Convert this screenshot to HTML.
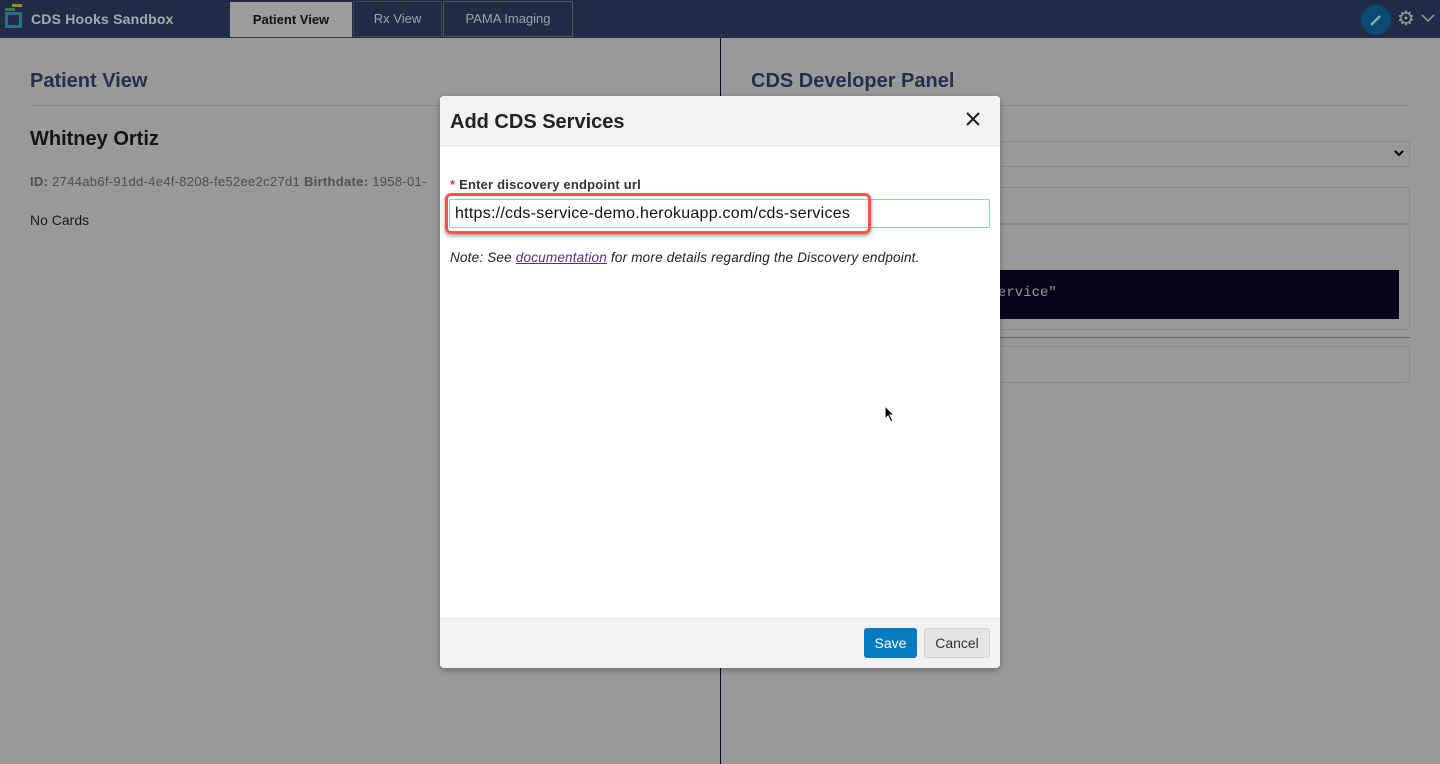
<!DOCTYPE html>
<html><head><meta charset="utf-8"><style>
*{box-sizing:border-box;margin:0;padding:0}
body{width:1440px;height:764px;overflow:hidden;background:#999;font-family:"Liberation Sans",sans-serif;position:relative}
.a{position:absolute}
</style></head><body>
<div class="a" style="left:0;top:0;width:1440px;height:38px;background:#212d47"></div>
<div class="a" style="left:12px;top:4px;width:10px;height:3px;background:#a08a18"></div>
<div class="a" style="left:5px;top:8px;width:10px;height:3px;background:#3a7a4a"></div>
<div class="a" style="left:5px;top:12px;width:17px;height:16px;border:3px solid #2a6d8a"></div>
<div class="a" style="left:31px;top:11px;color:#a5a9b0;font-weight:bold;font-size:14px;letter-spacing:0.2px">CDS Hooks Sandbox</div>
<div class="a" style="left:230px;top:2px;width:122px;height:36px;background:#9c9c9c;border-bottom:1px solid #333;color:#111;font-weight:bold;font-size:13px;text-align:center;line-height:36px">Patient View</div>
<div class="a" style="left:353px;top:1px;width:89px;height:36px;background:#212d47;border:1px solid #444;color:#9ea2aa;font-size:13px;text-align:center;line-height:34px">Rx View</div>
<div class="a" style="left:443px;top:1px;width:130px;height:36px;background:#212d47;border:1px solid #555;color:#9ea2aa;font-size:13px;text-align:center;line-height:34px">PAMA Imaging</div>
<div class="a" style="left:1361px;top:5px;width:30px;height:30px;border-radius:50%;background:#0a4a73"></div>
<svg class="a" style="left:1367px;top:11px" width="18" height="18"><path d="M4 14 L13 5" stroke="#8aa" stroke-width="2.5"/></svg>
<div class="a" style="left:1397px;top:6px;color:#999;font-size:20px">⚙</div>
<svg class="a" style="left:1421px;top:13px" width="14" height="10"><path d="M1 2 L7 8 L13 2" stroke="#999" fill="none" stroke-width="1.5"/></svg>
<div class="a" style="left:720px;top:38px;width:1px;height:726px;background:#0b0b30"></div>
<div class="a" style="left:30px;top:70px;font-size:20px;font-weight:bold;color:#233050">Patient View</div>
<div class="a" style="left:30px;top:105px;width:680px;height:1px;background:#888"></div>
<div class="a" style="left:30px;top:128px;font-size:20px;font-weight:bold;color:#141414">Whitney Ortiz</div>
<div class="a" style="left:30px;top:174px;font-size:13px;color:#505050;white-space:nowrap;letter-spacing:0.3px"><b>ID:</b> 2744ab6f-91dd-4e4f-8208-fe52ee2c27d1 <b>Birthdate:</b> 1958-01-</div>
<div class="a" style="left:30px;top:212px;font-size:14px;color:#1a1a1a">No Cards</div>
<div class="a" style="left:751px;top:70px;font-size:20px;font-weight:bold;color:#233050">CDS Developer Panel</div>
<div class="a" style="left:750px;top:105px;width:660px;height:1px;background:#888"></div>
<div class="a" style="left:900px;top:141px;width:510px;height:26px;border:1px solid #888;border-radius:3px"></div>
<svg class="a" style="left:1394px;top:150px" width="10" height="8"><path d="M1 1 L5 5 L9 1" stroke="#000" fill="none" stroke-width="2"/></svg>
<div class="a" style="left:900px;top:187px;width:510px;height:37px;border:1px solid #888;border-radius:3px"></div>
<div class="a" style="left:900px;top:224px;width:510px;height:106px;border:1px solid #888;border-radius:3px"></div>
<div class="a" style="left:900px;top:270px;width:499px;height:49px;background:#06031a"></div>
<div class="a" style="left:998px;top:285px;font-family:'Liberation Mono',monospace;font-size:14px;color:#999">ervice"</div>
<div class="a" style="left:900px;top:337px;width:510px;height:1px;background:#666"></div>
<div class="a" style="left:900px;top:346px;width:510px;height:37px;border:1px solid #888;border-radius:3px"></div>
<div class="a" style="left:440px;top:96px;width:560px;height:572px;background:#fff;border-radius:4px;box-shadow:0 2px 8px rgba(0,0,0,.3);overflow:hidden">
 <div class="a" style="left:0;top:0;width:560px;height:50px;background:#f2f2f2;border-bottom:1px solid #e4e4e4"></div>
 <div class="a" style="left:10px;top:15px;font-size:20px;font-weight:bold;color:#222">Add CDS Services</div>
 <svg class="a" style="left:526px;top:16px" width="14" height="14"><path d="M1 1 L13 13 M13 1 L1 13" stroke="#222" stroke-width="2"/></svg>
 <div class="a" style="left:10px;top:81px;font-size:13px;font-weight:bold;color:#333;letter-spacing:0.2px"><span style="color:#e33">*</span> Enter discovery endpoint url</div>
 <div class="a" style="left:9px;top:103px;width:541px;height:29px;border:1px solid #8cc8ea;border-radius:2px"></div>
 <div class="a" style="left:5px;top:97px;width:426px;height:41px;border:3px solid #f0564a;border-radius:6px;box-shadow:0 2px 4px rgba(0,0,0,.4)"></div>
 <div class="a" style="left:15px;top:109px;font-size:16px;color:#111;letter-spacing:0.25px">https://cds-service-demo.herokuapp.com/cds-services</div>
 <div class="a" style="left:10px;top:154px;font-size:13.5px;font-style:italic;color:#222;letter-spacing:0.2px;white-space:nowrap">Note: See <span style="color:#5a2aa0;text-decoration:underline">documentation</span> for more details regarding the Discovery endpoint.</div>
 <div class="a" style="left:0;top:522px;width:560px;height:50px;background:#f2f2f2;border-top:1px solid #e4e4e4"></div>
 <div class="a" style="left:424px;top:532px;width:53px;height:30px;background:#0a7ac0;border-radius:3px;color:#fff;font-size:14px;text-align:center;line-height:30px">Save</div>
 <div class="a" style="left:484px;top:532px;width:66px;height:30px;background:#e3e4e6;border:1px solid #d3d3d3;border-radius:3px;color:#333;font-size:14px;text-align:center;line-height:28px">Cancel</div>
</div>
<svg class="a" style="left:884px;top:405px" width="12" height="18"><path d="M1 1 L1 14 L4 11 L7 17 L9 16 L6 10 L10 10 Z" fill="#000" stroke="#fff" stroke-width="1"/></svg>
</body></html>
